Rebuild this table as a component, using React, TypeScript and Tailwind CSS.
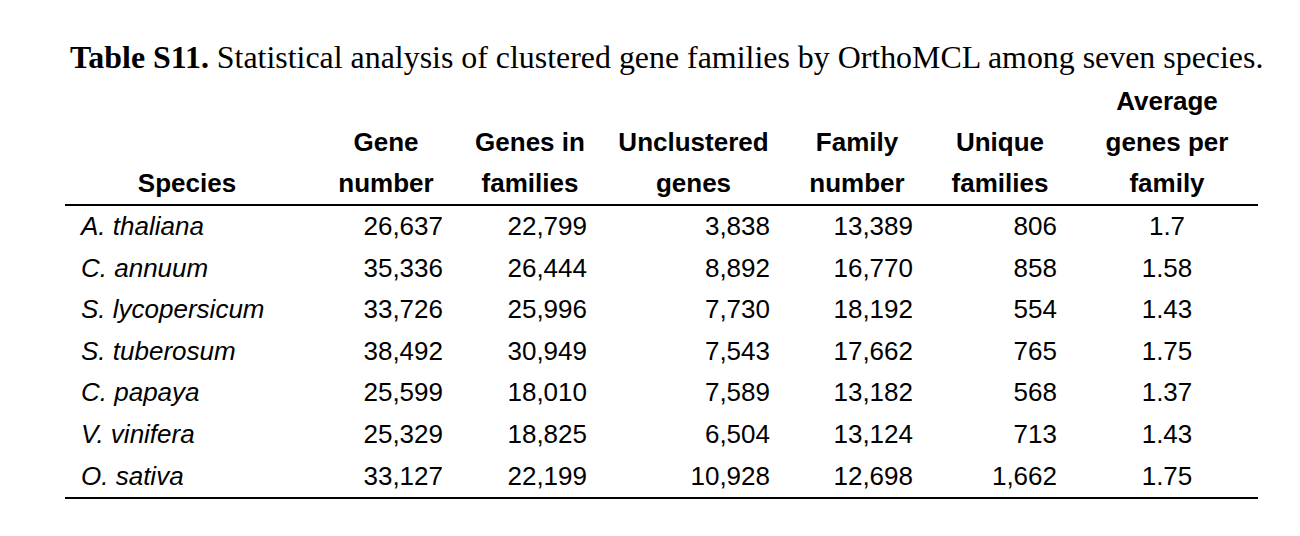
import React from 'react';

const rows = [
  { species: 'A. thaliana', values: ['26,637', '22,799', '3,838', '13,389', '806'], avg: '1.7' },
  { species: 'C. annuum', values: ['35,336', '26,444', '8,892', '16,770', '858'], avg: '1.58' },
  { species: 'S. lycopersicum', values: ['33,726', '25,996', '7,730', '18,192', '554'], avg: '1.43' },
  { species: 'S. tuberosum', values: ['38,492', '30,949', '7,543', '17,662', '765'], avg: '1.75' },
  { species: 'C. papaya', values: ['25,599', '18,010', '7,589', '13,182', '568'], avg: '1.37' },
  { species: 'V. vinifera', values: ['25,329', '18,825', '6,504', '13,124', '713'], avg: '1.43' },
  { species: 'O. sativa', values: ['33,127', '22,199', '10,928', '12,698', '1,662'], avg: '1.75' },
];

// right padding per numeric column, so the digits line up where the original puts them
const numPad = ['pr-[20px]', 'pr-[10px]', 'pr-[20px]', 'pr-[11px]', 'pr-[19px]'];

const headers = [
  ['', '', 'Species'],
  ['', 'Gene', 'number'],
  ['', 'Genes in', 'families'],
  ['', 'Unclustered', 'genes'],
  ['', 'Family', 'number'],
  ['', 'Unique', 'families'],
  ['Average', 'genes per', 'family'],
];

const gridCols = 'grid grid-cols-[244px_154px_134px_193px_134px_152px_182px]';

const App: React.FC = () => {
  return (
    <div className="w-[1300px] h-[536px] bg-white text-black pt-[38px]">
      {/* Caption */}
      <p className="pl-[70px] whitespace-nowrap text-[31.9px] leading-[40px] font-['Liberation_Serif',serif]">
        <span className="font-bold">Table S11.</span> Statistical analysis of clustered gene families by OrthoMCL among seven species.
      </p>

      <div className="ml-[65px] mt-[2px] w-[1193px] font-['Liberation_Sans',Arial,sans-serif] text-[26px]">
        {/* Header */}
        <div className={`${gridCols} border-b-2 border-black`}>
          {headers.map((lines, i) => (
            <div key={i} className="flex flex-col text-center font-bold leading-[41px] pt-[1px]">
              {lines.map((line, j) => (
                <span key={j} className="h-[41px] whitespace-nowrap">{line}</span>
              ))}
            </div>
          ))}
        </div>

        {/* Body */}
        <div className="border-b-2 border-black">
          {rows.map((row) => (
            <div key={row.species} className={`${gridCols} h-[41.6px] leading-[41.6px]`}>
              <div className="pl-[16px] italic whitespace-nowrap">{row.species}</div>
              {row.values.map((v, i) => (
                <div key={i} className={`text-right ${numPad[i]}`}>{v}</div>
              ))}
              <div className="text-center">{row.avg}</div>
            </div>
          ))}
        </div>
      </div>
    </div>
  );
};

export default App;
